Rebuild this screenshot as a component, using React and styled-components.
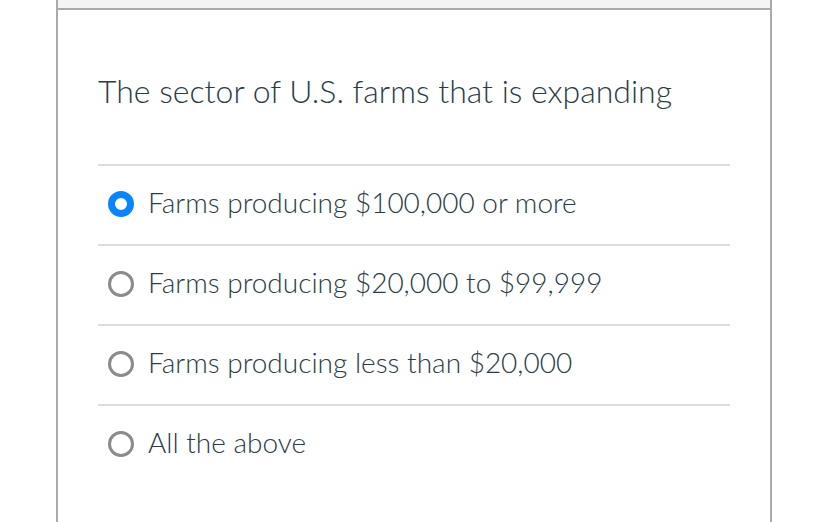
import React from "react";
import styled, { createGlobalStyle } from "styled-components";

const Global = createGlobalStyle`
  html, body { margin: 0; padding: 0; background: #fff; }
  body { font-family: Lato, "Noto Sans", sans-serif; color: #2d3b45; }
`;

const Page = styled.div`
  width: 828px;
  height: 522px;
  overflow: hidden;
  background: #fff;
`;

const Card = styled.div`
  margin-left: 56px;
  width: 712px;
  height: 540px;
  border-left: 2px solid #aaaaaa;
  border-right: 2px solid #aaaaaa;
  background: #fff;
`;

const CardHeader = styled.div`
  height: 8px;
  background: #f4f4f4;
  border-bottom: 2px solid #aaaaaa;
`;

const Body = styled.div`
  padding: 0 40px;
`;

const Question = styled.div`
  font-size: 32px;
  font-weight: 300;
  line-height: 36px;
  padding-top: 63px;
  padding-bottom: 55px;
`;

const Answers = styled.div`
  display: flex;
  flex-direction: column;
`;

const Row = styled.label`
  display: flex;
  align-items: center;
  gap: 14px;
  height: 78px;
  border-top: 2px solid #dddddd;
  padding-left: 10px;
`;

const Radio = styled.span`
  box-sizing: border-box;
  width: 26px;
  height: 26px;
  border-radius: 50%;
  flex: none;
  border: ${(p) => (p.$checked ? "7px solid #0a84ff" : "3px solid #8b8b8b")};
  background: #fff;
  margin-bottom: 2px;
`;

const Label = styled.span`
  font-size: 28px;
  font-weight: 300;
  line-height: 32px;
  margin-bottom: 6px;
`;

const options = [
  "Farms producing $100,000 or more",
  "Farms producing $20,000 to $99,999",
  "Farms producing less than $20,000",
  "All the above",
];

export default function App() {
  return (
    <Page>
      <Global />
      <Card>
        <CardHeader />
        <Body>
          <Question>The sector of U.S. farms that is expanding</Question>
          <Answers>
            {options.map((o, i) => (
              <Row key={i}>
                <Radio $checked={i === 0} />
                <Label>{o}</Label>
              </Row>
            ))}
          </Answers>
        </Body>
      </Card>
    </Page>
  );
}
